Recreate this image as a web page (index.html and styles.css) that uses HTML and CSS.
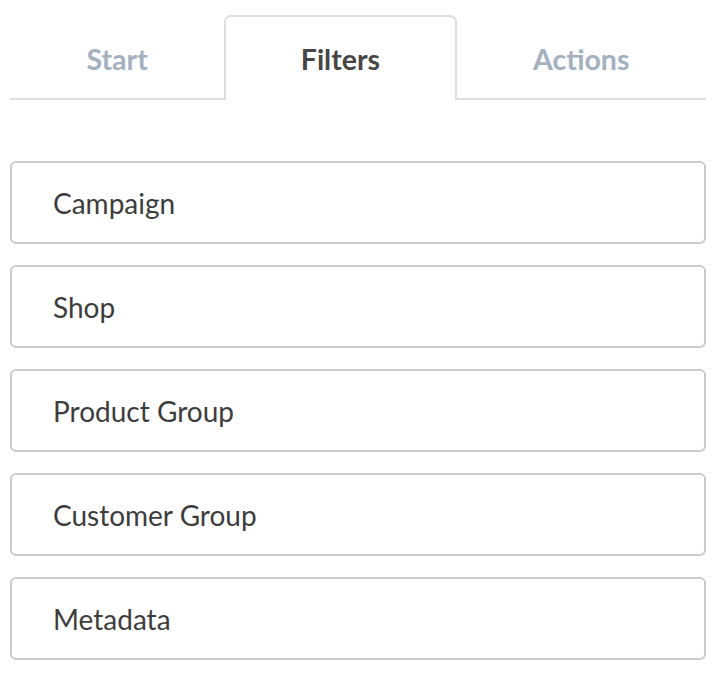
FILE: index.html
```html
<!DOCTYPE html>
<html>
<head>
<meta charset="utf-8">
<link rel="stylesheet" href="styles.css">
</head>
<body>
<div class="panel">
  <div class="tabs">
    <div class="tab">Start</div>
    <div class="tab active">Filters</div>
    <div class="tab">Actions</div>
  </div>
  <div class="list">
    <div class="item">Campaign</div>
    <div class="item">Shop</div>
    <div class="item">Product Group</div>
    <div class="item">Customer Group</div>
    <div class="item">Metadata</div>
  </div>
</div>
</body>
</html>
```
FILE: styles.css
```css
html, body {
  margin: 0;
  padding: 0;
  background: #fff;
}
body {
  font-family: "Lato", "Liberation Sans", sans-serif;
}
.panel {
  margin: 0 20px 0 10px;
  padding-top: 15px;
}
.tabs {
  display: flex;
  border-bottom: 2px solid #dedede;
}
.tab {
  flex: 1 1 auto;
  height: 85px;
  box-sizing: border-box;
  display: flex;
  align-items: center;
  justify-content: center;
  border: 2px solid transparent;
  border-bottom: none;
  font-size: 28.5px;
  font-weight: 700;
  color: #a5b0bf;
  margin-bottom: -2px;
  padding-top: 1px;
}
.tab.active {
  border-color: #dedede;
  border-radius: 7px 7px 0 0;
  background: #fff;
  color: #464646;
}
.list {
  display: flex;
  flex-direction: column;
  gap: 21px;
  margin-top: 61px;
}
.item {
  height: 83px;
  box-sizing: border-box;
  border: 2px solid #cbcbcb;
  border-radius: 6px;
  display: flex;
  align-items: center;
  padding-left: 41px;
  padding-top: 1px;
  font-size: 28px;
  color: #3d3d3d;
}
```
